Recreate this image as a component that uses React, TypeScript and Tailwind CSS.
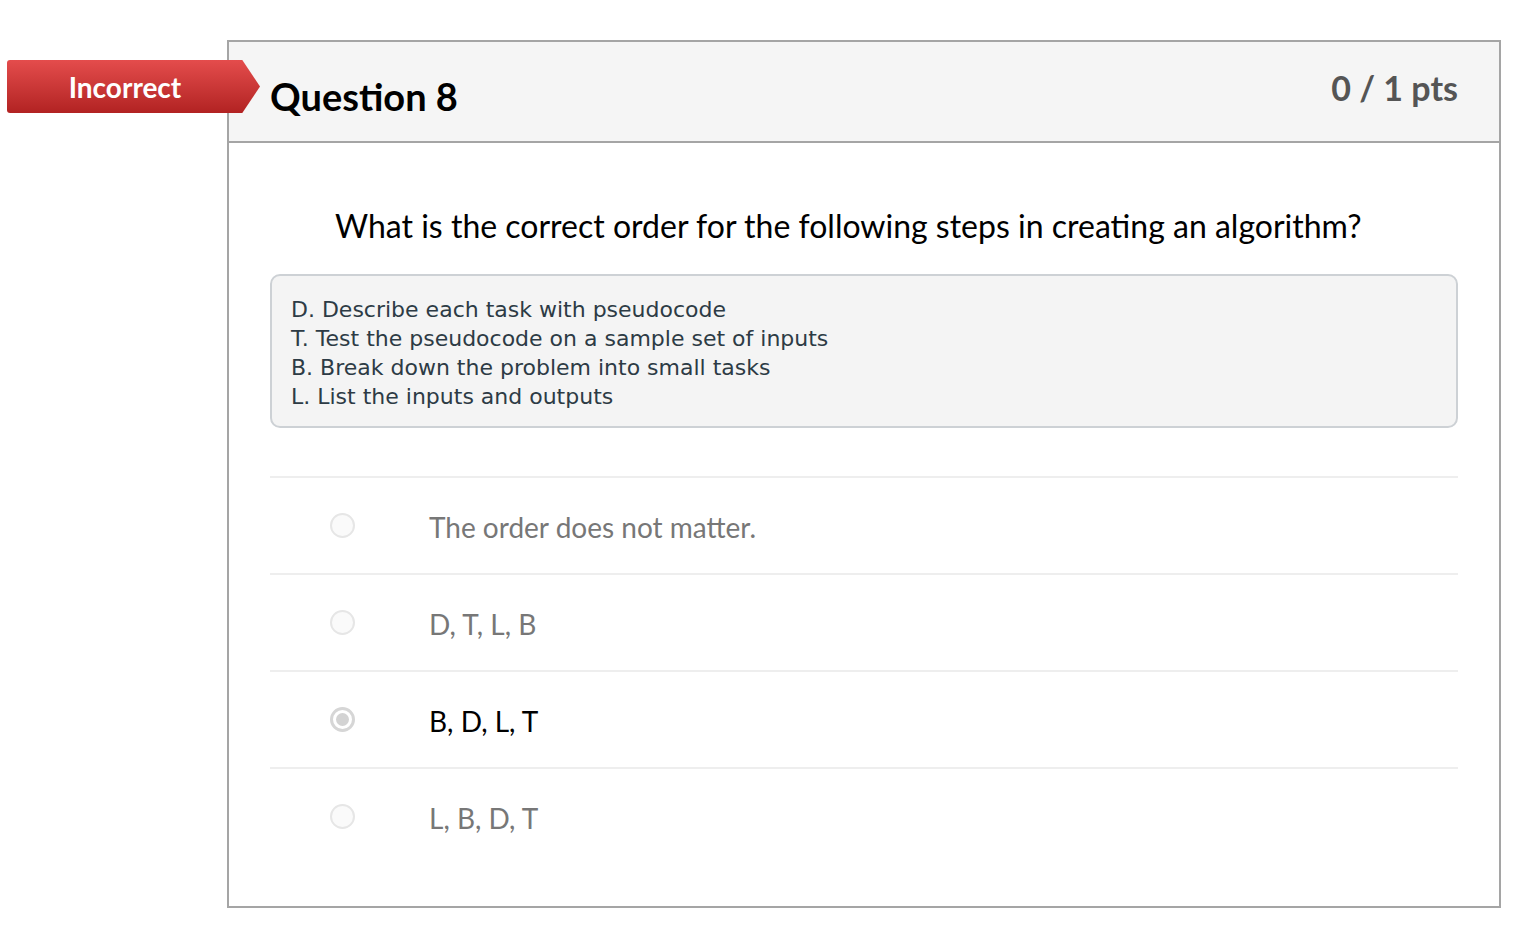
import React from "react";

const answers = [
  { label: "The order does not matter.", selected: false },
  { label: "D, T, L, B", selected: false },
  { label: "B, D, L, T", selected: true },
  { label: "L, B, D, T", selected: false },
];

const steps = [
  "D. Describe each task with pseudocode",
  "T. Test the pseudocode on a sample set of inputs",
  "B. Break down the problem into small tasks",
  "L. List the inputs and outputs",
];

function Radio({ selected }: { selected: boolean }) {
  if (selected) {
    return (
      <span className="flex h-[25px] w-[25px] items-center justify-center rounded-full border-[3px] border-[#d6d6d6] bg-white">
        <span className="h-[13px] w-[13px] rounded-full bg-[#d3d3d3]" />
      </span>
    );
  }
  return (
    <span className="block h-[25px] w-[25px] rounded-full border-2 border-[#e6e6e6] bg-[#fafafa]" />
  );
}

export default function App() {
  return (
    <div className="min-h-[930px] bg-white pt-[40px] font-['Lato',sans-serif]">
      <div className="relative ml-[227px] w-[1274px] border-2 border-[#a5a5a5]">
        <div className="absolute left-[-222px] top-[18px] flex h-[53px] w-[253px] items-center rounded-l-[3px] bg-linear-to-b from-[#e44c4c] to-[#b22222] pr-[17px] text-white [clip-path:polygon(0_0,93%_0,100%_50%,93%_100%,0_100%)]">
          <span className="w-full text-center text-[28px] font-bold">Incorrect</span>
        </div>
        <div className="flex h-[101px] items-start justify-between border-b-2 border-[#a5a5a5] bg-[#f5f5f5] px-[41px]">
          <h2 className="mt-[32px] text-[38px] font-bold leading-[1.2] text-black">Question 8</h2>
          <span className="mt-[26px] text-[34px] font-bold leading-[1.2] text-[#555]">0 / 1 pts</span>
        </div>
        <div className="px-[41px] pb-[42px]">
          <p className="mt-[62px] pl-[65px] text-[32px] leading-[42px] text-black">
            What is the correct order for the following steps in creating an algorithm?
          </p>
          <div className="mt-[27px] rounded-[10px] border-2 border-[#cdd1d5] bg-[#f4f4f4] px-[19px] pb-[15px] pt-[19px] font-['Comic_Sans_MS','DejaVu_Sans',sans-serif] text-[22px] leading-[29px] text-[#2d3b45]">
            {steps.map((s) => (
              <div key={s}>{s}</div>
            ))}
          </div>
          <div className="mt-[48px]">
            {answers.map((a) => (
              <div key={a.label} className="flex h-[97px] items-center border-t-2 border-[#eeeeee] pl-[60px]">
                <Radio selected={a.selected} />
                <span className={`ml-[74px] pt-[2px] text-[28px] ${a.selected ? "text-black" : "text-[#777]"}`}>
                  {a.label}
                </span>
              </div>
            ))}
          </div>
        </div>
      </div>
    </div>
  );
}
